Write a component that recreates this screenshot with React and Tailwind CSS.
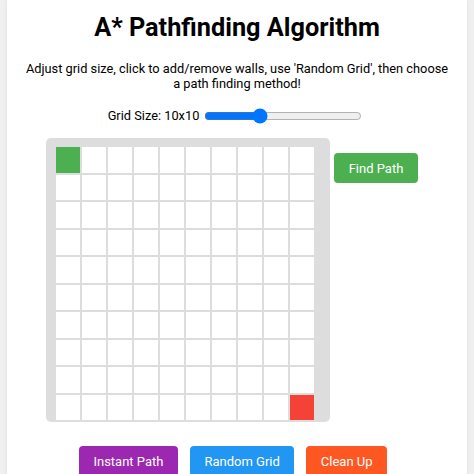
import React, { useState } from 'react';

const SIZE = 10;

const App = () => {
    const [size, setSize] = useState(10);

    const cells = [];
    for (let r = 0; r < SIZE; r++) {
        for (let c = 0; c < SIZE; c++) {
            let color = 'bg-white';
            if (r === 0 && c === 0) color = 'bg-[#4caf50]';
            if (r === SIZE - 1 && c === SIZE - 1) color = 'bg-[#f44336]';
            cells.push(<div key={`${r}-${c}`} className={`${color} border border-[#dddddd]`} />);
        }
    }

    return (
        <div className="min-h-screen bg-[#f0f0f0] px-[7px] font-['Roboto','Liberation_Sans',sans-serif] text-black">
            <div className="bg-white min-h-screen shadow-[0_0_4px_rgba(0,0,0,0.08)] pt-[12px] flex flex-col items-center">
                {/* Header */}
                <h1 className="text-[25.3px] font-bold leading-[32px]">A* Pathfinding Algorithm</h1>
                <p className="mt-[17px] max-w-[426px] text-[12.8px] leading-[15px] text-center">
                    Adjust grid size, click to add/remove walls, use 'Random Grid', then choose a path finding method!
                </p>

                {/* Grid size slider */}
                <div className="mt-[15px] flex items-center gap-[5px] text-[12.8px] ml-[-4px]">
                    <label>Grid Size: {size}x{size}</label>
                    <input
                        type="range"
                        min="5"
                        max="20"
                        value={size}
                        onChange={(e) => setSize(Number(e.target.value))}
                        className="w-[158px] m-0"
                    />
                </div>

                {/* Grid + Find Path */}
                <div className="mt-[13px] flex items-start gap-[4px] ml-[-10px]">
                    <div className="bg-[#dddddd] rounded-[5px] pt-[8px] pl-[9px] pr-[15px] pb-[1px]">
                        <div className="grid grid-cols-[repeat(10,26px)] auto-rows-[27.5px]">
                            {cells}
                        </div>
                    </div>
                    <button className="mt-[15px] bg-[#4caf50] text-white text-[13px] leading-[15px] px-[15px] py-[7.5px] rounded-[4px]">
                        Find Path
                    </button>
                </div>

                {/* Actions */}
                <div className="mt-[24px] flex gap-[12px] ml-[-8px]">
                    <button className="bg-[#9c27b0] text-white text-[13px] leading-[15px] px-[14.5px] py-[8px] rounded-[4px]">
                        Instant Path
                    </button>
                    <button className="bg-[#2196f3] text-white text-[13px] leading-[15px] px-[14.5px] py-[8px] rounded-[4px]">
                        Random Grid
                    </button>
                    <button className="bg-[#ff5722] text-white text-[13px] leading-[15px] px-[14.5px] py-[8px] rounded-[4px]">
                        Clean Up
                    </button>
                </div>
            </div>
        </div>
    );
};

export default App;
